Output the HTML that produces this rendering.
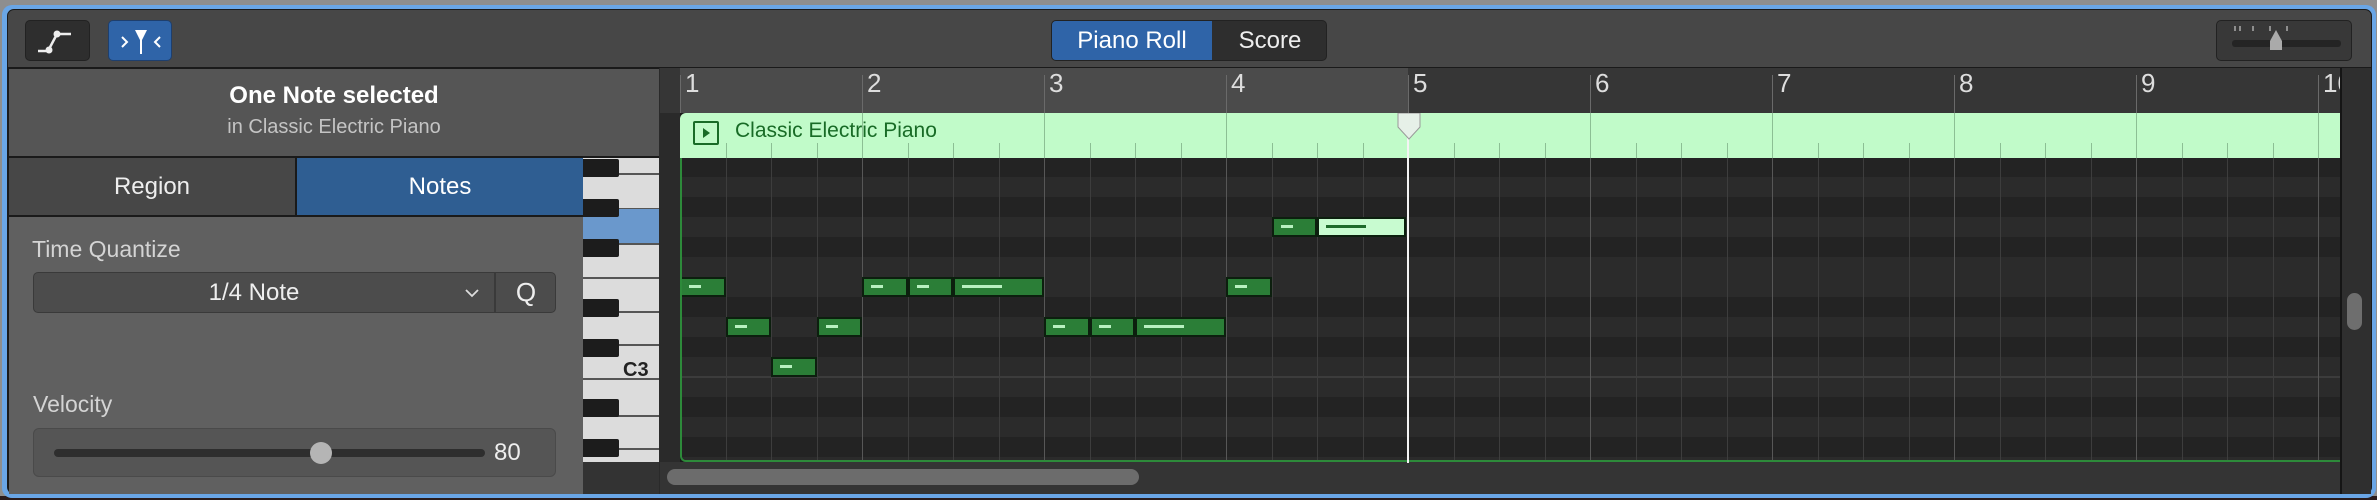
<!DOCTYPE html>
<html><head><meta charset="utf-8"><style>
*{margin:0;padding:0;box-sizing:border-box}
body{width:2377px;height:500px;background:#8e8e8e;position:relative;overflow:hidden;font-family:"Liberation Sans",sans-serif}
.a{position:absolute}
</style></head><body>
<div class="a" style="left:0;top:496px;width:2377px;height:4px;background:#2a1c1c"></div>
<div class="a" style="left:2px;top:5px;width:2374px;height:493px;background:#6aa6e6;border-radius:10px"></div>
<div class="a" style="left:7px;top:9px;width:2365px;height:485px;background:#1a1a1a;border-radius:7px;overflow:hidden" id="win">
</div>
<!-- toolbar -->
<div class="a" style="left:8px;top:10px;width:2363px;height:57px;background:#474747;border-radius:6px 6px 0 0"></div>
<div class="a" style="left:25px;top:20px;width:65px;height:41px;background:#2e2e2e;border:1px solid #222;border-radius:5px">
<svg width="65" height="41" style="position:absolute;left:0;top:0"><path d="M12 30 H22 L31 13 H45" stroke="#eee" stroke-width="2.5" fill="none"/><circle cx="23" cy="29" r="3.5" fill="#eee"/><circle cx="31" cy="13" r="3.5" fill="#eee"/></svg></div>
<div class="a" style="left:108px;top:20px;width:64px;height:41px;background:#2f64a8;border:1px solid #1e3f6e;border-radius:5px">
<svg width="64" height="41" style="position:absolute;left:0;top:0"><path d="M13 16 L18 21 L13 26 M51 16 L46 21 L51 26" stroke="#fff" stroke-width="2" fill="none"/><path d="M26 9 H38 L33 19 V33 H31 V19 Z" fill="#fff"/></svg></div>
<div class="a" style="left:1051px;top:20px;width:276px;height:41px;background:#2e2e2e;border:1px solid #222;border-radius:5px;overflow:hidden">
<div class="a" style="left:0;top:0;width:160px;height:39px;background:#2f64a8;color:#fff;font-size:24px;line-height:39px;text-align:center">Piano Roll</div>
<div class="a" style="left:161px;top:0;width:114px;height:39px;color:#eee;font-size:24px;line-height:39px;text-align:center">Score</div></div>
<div class="a" style="left:2216px;top:20px;width:136px;height:41px;background:#383838;border:1px solid #222;border-radius:5px">
<svg width="136" height="41" style="position:absolute;left:0;top:0"><g stroke="#aaa" stroke-width="1.5"><path d="M18 5v5M23 5v5M36 5v5M53 5v5M70 5v5"/></g><rect x="15" y="19" width="109" height="7" rx="3" fill="#242424"/><path d="M59 9 L65 20 V29 H53 V20 Z" fill="#aaa"/></svg></div>
<!-- left header -->
<div class="a" style="left:9px;top:69px;width:650px;height:87px;background:#555"></div>
<div class="a" style="left:9px;top:82px;width:650px;text-align:center;color:#fff;font-weight:bold;font-size:24px">One Note selected</div>
<div class="a" style="left:9px;top:116px;width:650px;text-align:center;color:#c4c4c4;font-size:20px">in Classic Electric Piano</div>
<!-- tabs -->
<div class="a" style="left:9px;top:158px;width:286px;height:57px;background:#474747;color:#eee;font-size:24px;line-height:57px;text-align:center">Region</div>
<div class="a" style="left:297px;top:158px;width:286px;height:57px;background:#2f5e92;color:#fff;font-size:24px;line-height:57px;text-align:center">Notes</div>
<div class="a" style="left:9px;top:217px;width:574px;height:277px;background:#606060"></div>
<div class="a" style="left:32px;top:236px;color:#d4d4d4;font-size:23px">Time Quantize</div>
<div class="a" style="left:33px;top:272px;width:523px;height:41px;background:#4c4c4c;border:1px solid #3a3a3a;border-radius:5px">
<div class="a" style="left:0;top:0;width:440px;line-height:39px;text-align:center;color:#eee;font-size:24px">1/4 Note</div>
<svg class="a" style="left:430px;top:13px" width="16" height="14"><path d="M2 4 L8 10 L14 4" stroke="#ddd" stroke-width="1.8" fill="none"/></svg>
<div class="a" style="left:460px;top:0;width:2px;height:39px;background:#3a3a3a"></div>
<div class="a" style="left:462px;top:0;width:60px;line-height:39px;text-align:center;color:#eee;font-size:26px">Q</div></div>
<div class="a" style="left:33px;top:391px;color:#d4d4d4;font-size:23px">Velocity</div>
<div class="a" style="left:33px;top:428px;width:523px;height:49px;background:#555;border:1px solid #4a4a4a;border-radius:6px">
<div class="a" style="left:20px;top:20px;width:431px;height:8px;background:#2e2e2e;border-radius:4px"></div>
<div class="a" style="left:276px;top:13px;width:22px;height:22px;background:#b5b5b5;border-radius:50%"></div>
<div class="a" style="left:460px;top:10px;color:#eee;font-size:24px">80</div></div>
<!-- piano -->
<div class="a" style="left:583px;top:158px;width:76px;height:304px;background:#dcdcdc;overflow:hidden" id="keys"></div>
<div class="a" style="left:659px;top:68px;width:21px;height:426px;background:#2a2a2a"></div>
<div class="a" style="left:583px;top:462px;width:76px;height:32px;background:#333"></div>
<!-- ruler -->
<div class="a" style="left:660px;top:68px;width:1711px;height:45px;background:#363636"></div>
<div class="a" style="left:680px;top:68px;width:728px;height:45px;background:#4b4b4b"></div>
<div id="ruler"></div>
<!-- region strip -->
<div class="a" style="left:680px;top:113px;width:1660px;height:45px;background:#c1fbc9;border-radius:6px 0 0 0" id="strip"></div>
<div class="a" style="left:693px;top:121px;width:26px;height:24px;border:2px solid #186b26;border-radius:2px"><svg width="22" height="20" style="position:absolute;left:0;top:0"><path d="M8 5 L15 10 L8 15Z" fill="#186b26"/></svg></div>
<div class="a" style="left:735px;top:119px;color:#186b26;font-size:21px">Classic Electric Piano</div>
<!-- grid -->
<div class="a" style="left:680px;top:158px;width:1660px;height:304px;background:#262626;overflow:hidden;border-left:2px solid #2d8a3a;border-bottom:2px solid #2d8a3a;border-radius:0 0 0 6px" id="grid"></div>
<div class="a" style="left:2340px;top:68px;width:31px;height:426px;background:#2f2f2f;border-left:2px solid #151515"></div>
<div class="a" style="left:2347px;top:293px;width:15px;height:37px;background:#6e6e6e;border-radius:8px"></div>
<div class="a" style="left:660px;top:462px;width:1680px;height:32px;background:#343434"></div>
<div class="a" style="left:667px;top:469px;width:472px;height:16px;background:#6c6c6c;border-radius:8px"></div>
<div class="a" style="left:1407px;top:113px;width:2px;height:350px;background:#f4f4f4"></div>
<svg class="a" style="left:1396px;top:113px" width="26" height="30"><path d="M2 0 H24 V14 L13 26 L2 14Z" fill="#e6f0e8" stroke="#999" stroke-width="1"/></svg>
<script>
var B=182,b=45.5,x0=680;
var r=document.getElementById('ruler'),s=document.getElementById('strip'),g=document.getElementById('grid'),k=document.getElementById('keys');
var h='';
var blacks=[0,2,4,7,9,12,14];
for(var i=0;i<16;i++){var dark=blacks.indexOf(i)>=0;h+='<div class="a" style="left:0;top:'+(i*20-1)+'px;width:1660px;height:20px;background:'+(dark?'#232323':'#2b2b2b')+'"></div>';}
h+='<div class="a" style="left:0;top:218px;width:1660px;height:2px;background:#3c3c3c"></div>';
for(var j=0;j<37;j++){var x=j*b-2;if(x>1660)break;h+='<div class="a" style="left:'+x+'px;top:0;width:1px;height:304px;background:'+(j%4==0?'#575757':'#3d3d3d')+'"></div>';}
var notes=[[6,0,1],[6,4,1],[6,5,1],[6,6,2],[6,12,1],[8,1,1],[8,3,1],[8,8,1],[8,9,1],[8,10,2],[10,2,1],[3,13,1]];
notes.forEach(function(n){var l=n[1]*b-2,w=n[2]*b;h+='<div class="a" style="left:'+l+'px;top:'+(n[0]*20-1)+'px;width:'+w+'px;height:20px;background:#2b7e37;border:2px solid #0c1f0e"><div class="a" style="left:7px;top:6px;width:'+(n[2]==1?12:40)+'px;height:3px;background:#b8f0c0"></div></div>';});
h+='<div class="a" style="left:'+(14*b-2)+'px;top:59px;width:'+(2*b-2)+'px;height:20px;background:#c8fbd0;border:2px solid #0c1f0e"><div class="a" style="left:7px;top:6px;width:40px;height:3px;background:#1d6a2a"></div></div>';
g.innerHTML=h;
h='';
for(var j=0;j<10;j++){var x=x0+j*B;h+='<div class="a" style="left:'+x+'px;top:75px;width:1px;height:38px;background:#6a6a6a"></div><div class="a" style="left:'+(x+5)+'px;top:68px;color:#ddd;font-size:26px">'+(j+1)+'</div>';}
r.innerHTML=h;
h='';
for(var j=1;j<37;j++){var x=j*b;if(x>1660)break;h+='<div class="a" style="left:'+x+'px;top:'+(j%4==0?0:30)+'px;width:1px;height:'+(j%4==0?45:15)+'px;background:#8cbf94"></div>';}
s.innerHTML+=h;
h='';
var seps=[15,50,85,119,153,186,220,257,290];
seps.forEach(function(y){h+='<div class="a" style="left:0;top:'+y+'px;width:76px;height:2px;background:#555"></div>';});
h+='<div class="a" style="left:0;top:51px;width:76px;height:34px;background:#6a98cc"></div>';
blacks.forEach(function(i){h+='<div class="a" style="left:0;top:'+(i*20+1)+'px;width:36px;height:18px;background:#1c1c1c;border-radius:0 2px 2px 0"></div>';});
h+='<div class="a" style="left:40px;top:201px;color:#222;font-weight:bold;font-size:20px">C3</div>';
k.innerHTML=h;
</script>
</body></html>
